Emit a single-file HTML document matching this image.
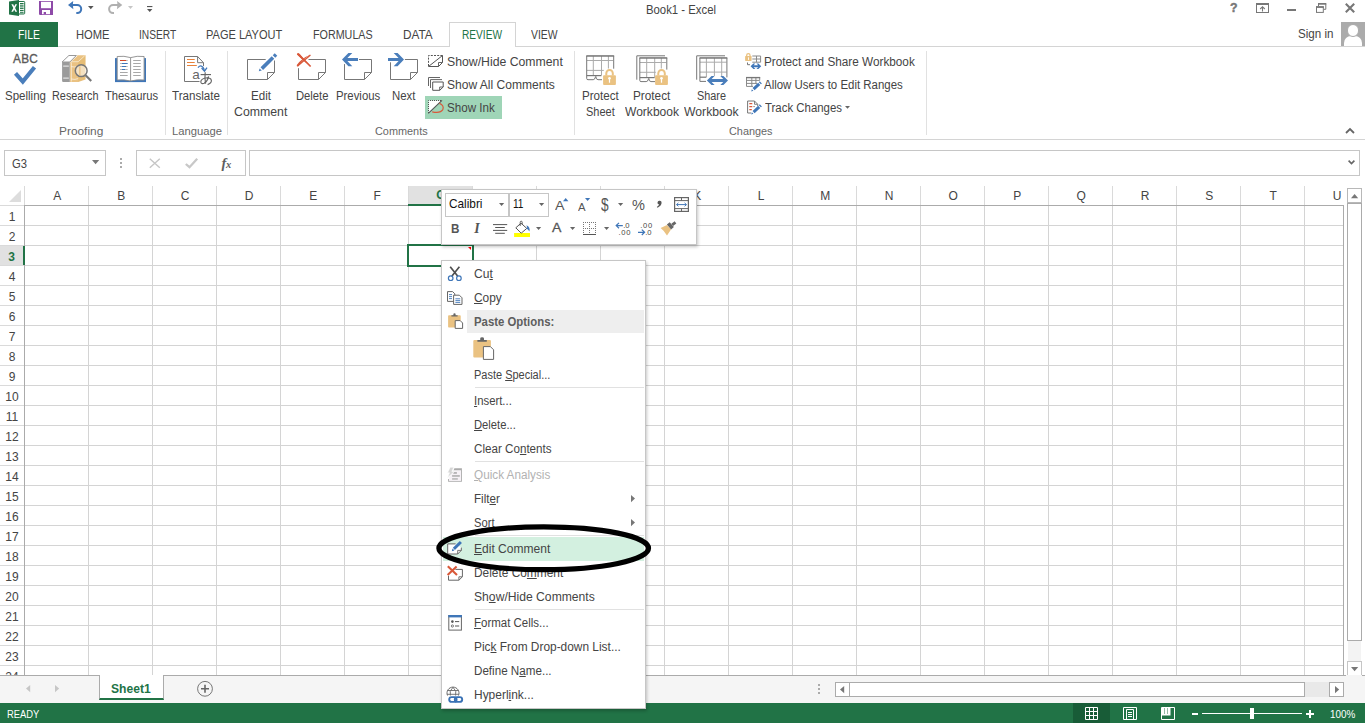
<!DOCTYPE html>
<html><head><meta charset="utf-8"><title>Book1 - Excel</title>
<style>
*{box-sizing:border-box;margin:0;padding:0}
html,body{width:1365px;height:723px;overflow:hidden;background:#fff;font-family:"Liberation Sans",sans-serif}
#app{position:relative;width:1365px;height:723px;overflow:hidden;background:#fff}
.t{position:absolute;white-space:pre;transform-origin:0 50%;font-family:"Liberation Sans",sans-serif}
.t u{text-decoration:underline;text-underline-offset:1px}
.a{position:absolute}
.vsep{position:absolute;width:1px;background:#e1e1e1;top:51px;height:84px}
svg{position:absolute;overflow:visible}
</style></head><body><div id="app">
<!-- tab row -->
<div class="a" style="left:0;top:46px;width:1365px;height:1px;background:#d4d4d4"></div>
<div class="a" style="left:0;top:22px;width:58px;height:25px;background:#217346"></div>
<div class="a" style="left:449px;top:22px;width:67px;height:25px;background:#fff;border:1px solid #d4d4d4;border-bottom:none"></div>
<!-- avatar -->
<div class="a" style="left:1341px;top:22px;width:24px;height:24px;background:#ababab;overflow:hidden">
 <div class="a" style="left:2.6px;top:13.6px;width:18.8px;height:16px;border-radius:7px 7px 0 0;background:#fff"></div>
 <div class="a" style="left:5.6px;top:2.2px;width:12.4px;height:12.4px;border-radius:50%;background:#fff;border:1px solid #ababab"></div>
</div>
<!-- ribbon -->
<div class="a" style="left:0;top:139px;width:1365px;height:1px;background:#d4d4d4"></div>
<div class="vsep" style="left:165px"></div>
<div class="vsep" style="left:227px"></div>
<div class="vsep" style="left:574px"></div>
<div class="vsep" style="left:926px"></div>
<div class="a" style="left:425px;top:96px;width:77px;height:23px;background:#9fd5b7"></div>
<!-- formula bar -->
<div class="a" style="left:4px;top:150px;width:102px;height:26px;border:1px solid #c6c6c6;background:#fff"></div>
<div class="a" style="left:136px;top:150px;width:110px;height:26px;border:1px solid #c6c6c6;background:#fff"></div>
<div class="a" style="left:249px;top:150px;width:1111px;height:26px;border:1px solid #c6c6c6;background:#fff"></div>
<!-- grid -->
<div class="a" style="left:25px;top:206px;width:1319px;height:469px;
 background-image:linear-gradient(to right,#d4d4d4 1px,transparent 1px),linear-gradient(to bottom,#d4d4d4 1px,transparent 1px);
 background-size:64px 20px,64px 20px;background-position:63px 0,0 19px"></div>
<div class="a" style="left:0;top:205px;width:24px;height:1px;background:#dadada"></div>
<div class="a" style="left:24px;top:205px;width:1320px;height:1px;background:#ababab"></div>
<div class="a" style="left:24px;top:205px;width:1px;height:470px;background:#ababab"></div>
<div class="a" style="left:1343px;top:205px;width:1px;height:470px;background:#ababab"></div>
<!-- select-all triangle -->
<svg style="left:9px;top:190px" width="12" height="12"><path d="M12 0V12H0Z" fill="#dddddd"/></svg>
<span class="t" style="left:25.2px;width:64px;text-align:center;top:187.7px;font-size:12px;line-height:16px;color:#444">A</span>
<span class="t" style="left:89.2px;width:64px;text-align:center;top:187.7px;font-size:12px;line-height:16px;color:#444">B</span>
<span class="t" style="left:153.2px;width:64px;text-align:center;top:187.7px;font-size:12px;line-height:16px;color:#444">C</span>
<span class="t" style="left:217.2px;width:64px;text-align:center;top:187.7px;font-size:12px;line-height:16px;color:#444">D</span>
<span class="t" style="left:281.2px;width:64px;text-align:center;top:187.7px;font-size:12px;line-height:16px;color:#444">E</span>
<span class="t" style="left:345.2px;width:64px;text-align:center;top:187.7px;font-size:12px;line-height:16px;color:#444">F</span>
<div style="position:absolute;left:409px;top:186px;width:63px;height:18px;background:#e1e1e1"></div>
<span class="t" style="left:408.8px;width:64px;text-align:center;top:187.2px;font-size:12px;line-height:16px;color:#217346;font-weight:700">G</span>
<span class="t" style="left:473.2px;width:64px;text-align:center;top:187.7px;font-size:12px;line-height:16px;color:#444">H</span>
<span class="t" style="left:537.2px;width:64px;text-align:center;top:187.7px;font-size:12px;line-height:16px;color:#444">I</span>
<span class="t" style="left:601.2px;width:64px;text-align:center;top:187.7px;font-size:12px;line-height:16px;color:#444">J</span>
<span class="t" style="left:665.2px;width:64px;text-align:center;top:187.7px;font-size:12px;line-height:16px;color:#444">K</span>
<span class="t" style="left:729.2px;width:64px;text-align:center;top:187.7px;font-size:12px;line-height:16px;color:#444">L</span>
<span class="t" style="left:793.2px;width:64px;text-align:center;top:187.7px;font-size:12px;line-height:16px;color:#444">M</span>
<span class="t" style="left:857.2px;width:64px;text-align:center;top:187.7px;font-size:12px;line-height:16px;color:#444">N</span>
<span class="t" style="left:921.2px;width:64px;text-align:center;top:187.7px;font-size:12px;line-height:16px;color:#444">O</span>
<span class="t" style="left:985.2px;width:64px;text-align:center;top:187.7px;font-size:12px;line-height:16px;color:#444">P</span>
<span class="t" style="left:1049.2px;width:64px;text-align:center;top:187.7px;font-size:12px;line-height:16px;color:#444">Q</span>
<span class="t" style="left:1113.2px;width:64px;text-align:center;top:187.7px;font-size:12px;line-height:16px;color:#444">R</span>
<span class="t" style="left:1177.2px;width:64px;text-align:center;top:187.7px;font-size:12px;line-height:16px;color:#444">S</span>
<span class="t" style="left:1241.2px;width:64px;text-align:center;top:187.7px;font-size:12px;line-height:16px;color:#444">T</span>
<span class="t" style="left:1305.2px;width:64px;text-align:center;top:187.7px;font-size:12px;line-height:16px;color:#444">U</span>
<div style="position:absolute;left:24px;top:186px;width:1px;height:19px;background:#dadada"></div>
<div style="position:absolute;left:88px;top:186px;width:1px;height:19px;background:#dadada"></div>
<div style="position:absolute;left:152px;top:186px;width:1px;height:19px;background:#dadada"></div>
<div style="position:absolute;left:216px;top:186px;width:1px;height:19px;background:#dadada"></div>
<div style="position:absolute;left:280px;top:186px;width:1px;height:19px;background:#dadada"></div>
<div style="position:absolute;left:344px;top:186px;width:1px;height:19px;background:#dadada"></div>
<div style="position:absolute;left:408px;top:186px;width:1px;height:19px;background:#dadada"></div>
<div style="position:absolute;left:472px;top:186px;width:1px;height:19px;background:#dadada"></div>
<div style="position:absolute;left:536px;top:186px;width:1px;height:19px;background:#dadada"></div>
<div style="position:absolute;left:600px;top:186px;width:1px;height:19px;background:#dadada"></div>
<div style="position:absolute;left:664px;top:186px;width:1px;height:19px;background:#dadada"></div>
<div style="position:absolute;left:728px;top:186px;width:1px;height:19px;background:#dadada"></div>
<div style="position:absolute;left:792px;top:186px;width:1px;height:19px;background:#dadada"></div>
<div style="position:absolute;left:856px;top:186px;width:1px;height:19px;background:#dadada"></div>
<div style="position:absolute;left:920px;top:186px;width:1px;height:19px;background:#dadada"></div>
<div style="position:absolute;left:984px;top:186px;width:1px;height:19px;background:#dadada"></div>
<div style="position:absolute;left:1048px;top:186px;width:1px;height:19px;background:#dadada"></div>
<div style="position:absolute;left:1112px;top:186px;width:1px;height:19px;background:#dadada"></div>
<div style="position:absolute;left:1176px;top:186px;width:1px;height:19px;background:#dadada"></div>
<div style="position:absolute;left:1240px;top:186px;width:1px;height:19px;background:#dadada"></div>
<div style="position:absolute;left:1304px;top:186px;width:1px;height:19px;background:#dadada"></div>
<div style="position:absolute;left:1368px;top:186px;width:1px;height:19px;background:#dadada"></div>
<div style="position:absolute;left:408px;top:204px;width:64px;height:2px;background:#217346"></div>
<span class="t" style="left:0;width:24px;text-align:center;top:209.0px;font-size:12px;line-height:16px;color:#444">1</span>
<div style="position:absolute;left:0;top:225px;width:24px;height:1px;background:#dadada"></div>
<span class="t" style="left:0;width:24px;text-align:center;top:229.0px;font-size:12px;line-height:16px;color:#444">2</span>
<div style="position:absolute;left:0;top:245px;width:24px;height:1px;background:#dadada"></div>
<div style="position:absolute;left:0;top:246px;width:25px;height:19px;background:#e1e1e1;border-right:2px solid #217346"></div>
<span class="t" style="left:0;width:24px;text-align:center;top:249.0px;font-size:12px;line-height:16px;color:#217346;font-weight:700;margin-left:-0.5px">3</span>
<div style="position:absolute;left:0;top:265px;width:24px;height:1px;background:#dadada"></div>
<span class="t" style="left:0;width:24px;text-align:center;top:269.0px;font-size:12px;line-height:16px;color:#444">4</span>
<div style="position:absolute;left:0;top:285px;width:24px;height:1px;background:#dadada"></div>
<span class="t" style="left:0;width:24px;text-align:center;top:289.0px;font-size:12px;line-height:16px;color:#444">5</span>
<div style="position:absolute;left:0;top:305px;width:24px;height:1px;background:#dadada"></div>
<span class="t" style="left:0;width:24px;text-align:center;top:309.0px;font-size:12px;line-height:16px;color:#444">6</span>
<div style="position:absolute;left:0;top:325px;width:24px;height:1px;background:#dadada"></div>
<span class="t" style="left:0;width:24px;text-align:center;top:329.0px;font-size:12px;line-height:16px;color:#444">7</span>
<div style="position:absolute;left:0;top:345px;width:24px;height:1px;background:#dadada"></div>
<span class="t" style="left:0;width:24px;text-align:center;top:349.0px;font-size:12px;line-height:16px;color:#444">8</span>
<div style="position:absolute;left:0;top:365px;width:24px;height:1px;background:#dadada"></div>
<span class="t" style="left:0;width:24px;text-align:center;top:369.0px;font-size:12px;line-height:16px;color:#444">9</span>
<div style="position:absolute;left:0;top:385px;width:24px;height:1px;background:#dadada"></div>
<span class="t" style="left:0;width:24px;text-align:center;top:389.0px;font-size:12px;line-height:16px;color:#444">10</span>
<div style="position:absolute;left:0;top:405px;width:24px;height:1px;background:#dadada"></div>
<span class="t" style="left:0;width:24px;text-align:center;top:409.0px;font-size:12px;line-height:16px;color:#444">11</span>
<div style="position:absolute;left:0;top:425px;width:24px;height:1px;background:#dadada"></div>
<span class="t" style="left:0;width:24px;text-align:center;top:429.0px;font-size:12px;line-height:16px;color:#444">12</span>
<div style="position:absolute;left:0;top:445px;width:24px;height:1px;background:#dadada"></div>
<span class="t" style="left:0;width:24px;text-align:center;top:449.0px;font-size:12px;line-height:16px;color:#444">13</span>
<div style="position:absolute;left:0;top:465px;width:24px;height:1px;background:#dadada"></div>
<span class="t" style="left:0;width:24px;text-align:center;top:469.0px;font-size:12px;line-height:16px;color:#444">14</span>
<div style="position:absolute;left:0;top:485px;width:24px;height:1px;background:#dadada"></div>
<span class="t" style="left:0;width:24px;text-align:center;top:489.0px;font-size:12px;line-height:16px;color:#444">15</span>
<div style="position:absolute;left:0;top:505px;width:24px;height:1px;background:#dadada"></div>
<span class="t" style="left:0;width:24px;text-align:center;top:509.0px;font-size:12px;line-height:16px;color:#444">16</span>
<div style="position:absolute;left:0;top:525px;width:24px;height:1px;background:#dadada"></div>
<span class="t" style="left:0;width:24px;text-align:center;top:529.0px;font-size:12px;line-height:16px;color:#444">17</span>
<div style="position:absolute;left:0;top:545px;width:24px;height:1px;background:#dadada"></div>
<span class="t" style="left:0;width:24px;text-align:center;top:549.0px;font-size:12px;line-height:16px;color:#444">18</span>
<div style="position:absolute;left:0;top:565px;width:24px;height:1px;background:#dadada"></div>
<span class="t" style="left:0;width:24px;text-align:center;top:569.0px;font-size:12px;line-height:16px;color:#444">19</span>
<div style="position:absolute;left:0;top:585px;width:24px;height:1px;background:#dadada"></div>
<span class="t" style="left:0;width:24px;text-align:center;top:589.0px;font-size:12px;line-height:16px;color:#444">20</span>
<div style="position:absolute;left:0;top:605px;width:24px;height:1px;background:#dadada"></div>
<span class="t" style="left:0;width:24px;text-align:center;top:609.0px;font-size:12px;line-height:16px;color:#444">21</span>
<div style="position:absolute;left:0;top:625px;width:24px;height:1px;background:#dadada"></div>
<span class="t" style="left:0;width:24px;text-align:center;top:629.0px;font-size:12px;line-height:16px;color:#444">22</span>
<div style="position:absolute;left:0;top:645px;width:24px;height:1px;background:#dadada"></div>
<span class="t" style="left:0;width:24px;text-align:center;top:649.0px;font-size:12px;line-height:16px;color:#444">23</span>
<div style="position:absolute;left:0;top:665px;width:24px;height:1px;background:#dadada"></div>
<span class="t" style="left:0;width:24px;text-align:center;top:669.0px;font-size:12px;line-height:16px;color:#444">24</span>
<div style="position:absolute;left:0;top:685px;width:24px;height:1px;background:#dadada"></div>
<!-- selected cell -->
<div class="a" style="left:407px;top:244px;width:67px;height:23px;border:2px solid #217346"></div>
<svg style="left:468px;top:247px" width="3" height="3"><path d="M0 0H3V3Z" fill="#ff0000"/></svg>
<!-- vertical scrollbar -->
<div class="a" style="left:1348px;top:203px;width:13px;height:458px;background:#f3f3f3"></div>
<div class="a" style="left:1347px;top:188px;width:15px;height:15px;border:1px solid #b8b8b8;background:#fff"></div>
<div class="a" style="left:1347px;top:203px;width:15px;height:438px;border:1px solid #ababab;background:#fff"></div>
<div class="a" style="left:1347px;top:661px;width:15px;height:15px;border:1px solid #c6c6c6;background:#fff"></div>
<svg style="left:1351px;top:193.5px" width="8" height="5"><path d="M0 4.2L3.6 0L7.2 4.2Z" fill="#777"/></svg>
<svg style="left:1351px;top:667px" width="8" height="5"><path d="M0 0L3.6 4.2L7.2 0Z" fill="#777"/></svg>
<!-- sheet tab bar -->
<div class="a" style="left:0;top:675px;width:1365px;height:28px;background:#f5f5f5"></div>
<div class="a" style="left:0;top:675px;width:1346px;height:1px;background:#ababab"></div>
<div class="a" style="left:1362px;top:675px;width:3px;height:1px;background:#ababab"></div>
<div class="a" style="left:99px;top:675px;width:65px;height:25px;background:#fff;border-left:1px solid #ababab;border-right:1px solid #ababab;border-bottom:2px solid #217346"></div>
<!-- hscroll -->
<div class="a" style="left:835px;top:682px;width:509px;height:15px;background:#e9e9e9"></div>
<div class="a" style="left:835px;top:682px;width:15px;height:15px;border:1px solid #ababab;background:#fff"></div>
<div class="a" style="left:849px;top:682px;width:456px;height:15px;border:1px solid #ababab;background:#fff"></div>
<div class="a" style="left:1329px;top:682px;width:15px;height:15px;border:1px solid #ababab;background:#fff"></div>
<svg style="left:840px;top:686px" width="5" height="8"><path d="M4.2 0V7.2L0 3.6Z" fill="#777"/></svg>
<svg style="left:1335px;top:686px" width="5" height="8"><path d="M0 0V7.2L4.2 3.6Z" fill="#777"/></svg>
<!-- status bar -->
<div class="a" style="left:0;top:703px;width:1365px;height:20px;background:#217346"></div>
<div class="a" style="left:1073px;top:703px;width:37px;height:20px;background:#185c37"></div>
<!-- mini toolbar -->
<div class="a" style="left:441px;top:189px;width:256px;height:56px;background:#fff;border:1px solid #c6c6c6;box-shadow:1px 2px 3px rgba(0,0,0,.22);z-index:20"></div>
<div class="a" style="left:445px;top:193px;width:64px;height:24px;background:#fff;border:1px solid #c6c6c6;z-index:21"></div>
<div class="a" style="left:509px;top:193px;width:40px;height:24px;background:#fff;border:1px solid #c6c6c6;z-index:21"></div>
<!-- context menu -->
<div class="a" style="left:441px;top:260px;width:205px;height:449px;background:#fff;border:1px solid #c6c6c6;box-shadow:1px 2px 3px rgba(0,0,0,.22);z-index:20"></div>
<div class="a" style="left:467px;top:310px;width:177px;height:23px;background:#eeeeee;z-index:21"></div>
<div class="a" style="left:443px;top:537px;width:201px;height:24px;background:#d3f0e0;z-index:21"></div>
<div class="a" style="left:475px;top:387px;width:169px;height:1px;background:#e1e1e1;z-index:21"></div>
<div class="a" style="left:475px;top:461px;width:169px;height:1px;background:#e1e1e1;z-index:21"></div>
<div class="a" style="left:475px;top:609px;width:169px;height:1px;background:#e1e1e1;z-index:21"></div>
<div class="a" style="left:475px;top:535px;width:169px;height:1px;background:#e1e1e1;z-index:21"></div>
<span class="t" style="left:646.0px;top:1.5px;font-size:12px;font-weight:400;color:#444;line-height:16px;transform:scaleX(0.9453);">Book1 - Excel</span>
<span class="t" style="left:18.0px;top:26.5px;font-size:12px;font-weight:400;color:#fff;line-height:16px;transform:scaleX(0.8681);">FILE</span>
<span class="t" style="left:76.0px;top:26.5px;font-size:12px;font-weight:400;color:#444;line-height:16px;transform:scaleX(0.9306);">HOME</span>
<span class="t" style="left:139.3px;top:26.5px;font-size:12px;font-weight:400;color:#444;line-height:16px;transform:scaleX(0.8494);">INSERT</span>
<span class="t" style="left:206.3px;top:26.5px;font-size:12px;font-weight:400;color:#444;line-height:16px;transform:scaleX(0.9189);">PAGE LAYOUT</span>
<span class="t" style="left:312.8px;top:26.5px;font-size:12px;font-weight:400;color:#444;line-height:16px;transform:scaleX(0.8952);">FORMULAS</span>
<span class="t" style="left:402.8px;top:26.5px;font-size:12px;font-weight:400;color:#444;line-height:16px;transform:scaleX(0.9823);">DATA</span>
<span class="t" style="left:462.0px;top:26.5px;font-size:12px;font-weight:400;color:#217346;line-height:16px;transform:scaleX(0.8449);">REVIEW</span>
<span class="t" style="left:531.0px;top:26.5px;font-size:12px;font-weight:400;color:#444;line-height:16px;transform:scaleX(0.8640);">VIEW</span>
<span class="t" style="left:1298.0px;top:25.5px;font-size:12px;font-weight:400;color:#444;line-height:16px;transform:scaleX(0.9672);">Sign in</span>
<span class="t" style="left:5.0px;top:87.5px;font-size:12px;font-weight:400;color:#444;line-height:16px;transform:scaleX(0.9601);">Spelling</span>
<span class="t" style="left:52.0px;top:87.5px;font-size:12px;font-weight:400;color:#444;line-height:16px;transform:scaleX(0.9054);">Research</span>
<span class="t" style="left:105.0px;top:87.5px;font-size:12px;font-weight:400;color:#444;line-height:16px;transform:scaleX(0.9347);">Thesaurus</span>
<span class="t" style="left:172.0px;top:87.5px;font-size:12px;font-weight:400;color:#444;line-height:16px;transform:scaleX(0.9682);">Translate</span>
<span class="t" style="left:251.0px;top:87.5px;font-size:12px;font-weight:400;color:#444;line-height:16px;transform:scaleX(0.9668);">Edit</span>
<span class="t" style="left:234.3px;top:103.5px;font-size:12px;font-weight:400;color:#444;line-height:16px;transform:scaleX(1.0266);">Comment</span>
<span class="t" style="left:295.5px;top:87.5px;font-size:12px;font-weight:400;color:#444;line-height:16px;transform:scaleX(0.9369);">Delete</span>
<span class="t" style="left:335.5px;top:87.5px;font-size:12px;font-weight:400;color:#444;line-height:16px;transform:scaleX(0.9467);">Previous</span>
<span class="t" style="left:392.3px;top:87.5px;font-size:12px;font-weight:400;color:#444;line-height:16px;transform:scaleX(0.9478);">Next</span>
<span class="t" style="left:447.2px;top:54.4px;font-size:12px;font-weight:400;color:#444;line-height:16px;transform:scaleX(1.0212);">Show/Hide Comment</span>
<span class="t" style="left:447.2px;top:77.0px;font-size:12px;font-weight:400;color:#444;line-height:16px;transform:scaleX(1.0040);">Show All Comments</span>
<span class="t" style="left:447.2px;top:100.4px;font-size:12px;font-weight:400;color:#444;line-height:16px;transform:scaleX(0.9684);">Show Ink</span>
<span class="t" style="left:582.0px;top:87.5px;font-size:12px;font-weight:400;color:#444;line-height:16px;transform:scaleX(0.9654);">Protect</span>
<span class="t" style="left:586.3px;top:103.5px;font-size:12px;font-weight:400;color:#444;line-height:16px;transform:scaleX(0.9152);">Sheet</span>
<span class="t" style="left:633.4px;top:87.5px;font-size:12px;font-weight:400;color:#444;line-height:16px;transform:scaleX(0.9812);">Protect</span>
<span class="t" style="left:624.6px;top:103.5px;font-size:12px;font-weight:400;color:#444;line-height:16px;transform:scaleX(1.0035);">Workbook</span>
<span class="t" style="left:697.0px;top:87.5px;font-size:12px;font-weight:400;color:#444;line-height:16px;transform:scaleX(0.9054);">Share</span>
<span class="t" style="left:684.1px;top:103.5px;font-size:12px;font-weight:400;color:#444;line-height:16px;transform:scaleX(1.0165);">Workbook</span>
<span class="t" style="left:764.2px;top:54.4px;font-size:12px;font-weight:400;color:#444;line-height:16px;transform:scaleX(0.9800);">Protect and Share Workbook</span>
<span class="t" style="left:764.2px;top:77.0px;font-size:12px;font-weight:400;color:#444;line-height:16px;transform:scaleX(0.9546);">Allow Users to Edit Ranges</span>
<span class="t" style="left:765.0px;top:100.3px;font-size:12px;font-weight:400;color:#444;line-height:16px;transform:scaleX(0.9514);">Track Changes</span>
<span class="t" style="left:59.3px;top:122.9px;font-size:11px;font-weight:400;color:#666;line-height:16px;transform:scaleX(1.0809);">Proofing</span>
<span class="t" style="left:171.5px;top:122.9px;font-size:11px;font-weight:400;color:#666;line-height:16px;transform:scaleX(1.0214);">Language</span>
<span class="t" style="left:374.6px;top:122.9px;font-size:11px;font-weight:400;color:#666;line-height:16px;transform:scaleX(0.9890);">Comments</span>
<span class="t" style="left:729.0px;top:122.9px;font-size:11px;font-weight:400;color:#666;line-height:16px;transform:scaleX(0.9876);">Changes</span>
<span class="t" style="left:11.5px;top:155.5px;font-size:12px;font-weight:400;color:#444;line-height:16px;transform:scaleX(0.9366);">G3</span>
<span class="t" style="left:6.7px;top:706.0px;font-size:11px;font-weight:400;color:#fff;line-height:16px;transform:scaleX(0.8521);">READY</span>
<span class="t" style="left:1330.0px;top:706.0px;font-size:11px;font-weight:400;color:#fff;line-height:16px;transform:scaleX(0.8991);">100%</span>
<span class="t" style="left:111.3px;top:680.8px;font-size:13px;font-weight:700;color:#217346;line-height:16px;transform:scaleX(0.9310);">Sheet1</span>
<span class="t" style="left:448.5px;top:195.5px;font-size:13px;font-weight:400;color:#111;line-height:16px;transform:scaleX(0.9092);z-index:30;">Calibri</span>
<span class="t" style="left:512.5px;top:195.5px;font-size:13px;font-weight:400;color:#111;line-height:16px;transform:scaleX(0.7778);z-index:30;">11</span>
<span class="t" style="left:474.2px;top:265.9px;font-size:12px;font-weight:400;color:#444;line-height:16px;transform:scaleX(1.0060);z-index:30;">Cu<u>t</u></span>
<span class="t" style="left:474.2px;top:290.1px;font-size:12px;font-weight:400;color:#444;line-height:16px;transform:scaleX(0.9918);z-index:30;"><u>C</u>opy</span>
<span class="t" style="left:474.2px;top:314.0px;font-size:12px;font-weight:700;color:#5e5e5e;line-height:16px;transform:scaleX(0.9482);z-index:30;">Paste Options:</span>
<span class="t" style="left:474.2px;top:367.2px;font-size:12px;font-weight:400;color:#444;line-height:16px;transform:scaleX(0.9148);z-index:30;">Paste <u>S</u>pecial...</span>
<span class="t" style="left:474.2px;top:393.0px;font-size:12px;font-weight:400;color:#444;line-height:16px;transform:scaleX(0.9443);z-index:30;"><u>I</u>nsert...</span>
<span class="t" style="left:474.2px;top:417.0px;font-size:12px;font-weight:400;color:#444;line-height:16px;transform:scaleX(0.9351);z-index:30;"><u>D</u>elete...</span>
<span class="t" style="left:474.2px;top:440.6px;font-size:12px;font-weight:400;color:#444;line-height:16px;transform:scaleX(0.9692);z-index:30;">Clear Co<u>n</u>tents</span>
<span class="t" style="left:474.2px;top:467.1px;font-size:12px;font-weight:400;color:#b2b2b2;line-height:16px;transform:scaleX(0.9776);z-index:30;"><u>Q</u>uick Analysis</span>
<span class="t" style="left:474.2px;top:491.0px;font-size:12px;font-weight:400;color:#444;line-height:16px;transform:scaleX(0.9667);z-index:30;">Filt<u>e</u>r</span>
<span class="t" style="left:474.2px;top:514.5px;font-size:12px;font-weight:400;color:#444;line-height:16px;transform:scaleX(0.9298);z-index:30;">S<u>o</u>rt</span>
<span class="t" style="left:474.2px;top:540.7px;font-size:12px;font-weight:400;color:#444;line-height:16px;transform:scaleX(1.0033);z-index:30;"><u>E</u>dit Comment</span>
<span class="t" style="left:474.2px;top:564.7px;font-size:12px;font-weight:400;color:#444;line-height:16px;transform:scaleX(0.9904);z-index:30;">Delete Co<u>m</u>ment</span>
<span class="t" style="left:474.2px;top:588.9px;font-size:12px;font-weight:400;color:#444;line-height:16px;transform:scaleX(1.0117);z-index:30;">Sh<u>o</u>w/Hide Comments</span>
<span class="t" style="left:474.2px;top:614.8px;font-size:12px;font-weight:400;color:#444;line-height:16px;transform:scaleX(0.9560);z-index:30;"><u>F</u>ormat Cells...</span>
<span class="t" style="left:474.2px;top:638.7px;font-size:12px;font-weight:400;color:#444;line-height:16px;transform:scaleX(0.9916);z-index:30;">Pic<u>k</u> From Drop-down List...</span>
<span class="t" style="left:474.2px;top:663.0px;font-size:12px;font-weight:400;color:#444;line-height:16px;transform:scaleX(0.9694);z-index:30;">Define N<u>a</u>me...</span>
<span class="t" style="left:474.2px;top:686.8px;font-size:12px;font-weight:400;color:#444;line-height:16px;transform:scaleX(0.9959);z-index:30;">Hyperl<u>i</u>nk...</span>
<!-- ===== title bar icons ===== -->
<!-- excel logo -->
<svg style="left:9px;top:0px" width="17" height="17" viewBox="0 0 17 17">
 <rect x="9" y="1.5" width="6.7" height="12.5" rx="0.8" fill="#fff" stroke="#217346" stroke-width="1"/>
 <g fill="#217346"><rect x="11" y="3" width="3.6" height="1.3"/><rect x="11" y="5.3" width="3.6" height="1.3"/><rect x="11" y="7.6" width="3.6" height="1.3"/><rect x="11" y="9.9" width="3.6" height="1.3"/><rect x="11" y="12.2" width="3.6" height="1.0"/></g>
 <path d="M0 1.6L10 0V16L0 14.4Z" fill="#217346"/>
 <path d="M2.4 4.2H4.2L5.2 6.6L6.3 4.2H8L6.1 8L8.1 11.8H6.3L5.2 9.4L4.1 11.8H2.3L4.3 8Z" fill="#fff"/>
</svg>
<!-- save -->
<svg style="left:39px;top:1px" width="14" height="14" viewBox="0 0 14 14">
 <path d="M0 0H14V14H0.8L0 13.2Z" fill="#8e4aa8"/>
 <rect x="2" y="0.8" width="10" height="6.4" fill="#fff"/>
 <rect x="3" y="9" width="8" height="4.2" fill="#fff"/>
 <rect x="4.7" y="11" width="2.3" height="2.2" fill="#8e4aa8"/>
</svg>
<!-- undo -->
<svg style="left:67px;top:0px" width="16" height="15" viewBox="0 0 16 15">
 <path d="M1 5.1L6.2 1.1L5.9 3.9L7 4.2L6 6.4L6.4 9.2Z" fill="#3f76b8"/>
 <path d="M5.5 5.1H10.2A4 4 0 0 1 10.2 13.1H9.3" fill="none" stroke="#3f76b8" stroke-width="2"/>
</svg>
<svg style="left:88px;top:6px" width="6" height="4"><path d="M0 0H5.6L2.8 3.2Z" fill="#555"/></svg>
<!-- redo -->
<svg style="left:107px;top:0px" width="16" height="15" viewBox="0 0 16 15">
 <path d="M15.3 5.1L10.1 1.1L10.4 3.9L9.3 4.2L10.3 6.4L9.9 9.2Z" fill="#b0b0b0"/>
 <path d="M10.8 5.1H6.1A4 4 0 0 0 6.1 13.1H7" fill="none" stroke="#b0b0b0" stroke-width="2"/>
</svg>
<svg style="left:128px;top:6px" width="6" height="4"><path d="M0 0H5L2.5 3Z" fill="#c6c6c6"/></svg>
<!-- customize QAT -->
<svg style="left:147px;top:6px" width="6" height="7"><rect x="0" y="0" width="5.4" height="1.1" fill="#555"/><path d="M0 3H5.4L2.7 6Z" fill="#555"/></svg>
<!-- help ? -->
<span class="t" style="left:1229.6px;top:0.2px;font-size:13px;font-weight:700;color:#777;line-height:16px;-webkit-text-stroke:0.4px #777;transform:scaleX(0.95)">?</span>
<!-- ribbon display options -->
<svg style="left:1256px;top:3px" width="13" height="10" viewBox="0 0 13 10">
 <rect x="0.5" y="0.5" width="12" height="9" fill="none" stroke="#777" stroke-width="1"/>
 <rect x="0" y="0" width="13" height="2" fill="#777"/>
 <path d="M6.5 3.6V8.5M4.2 6L6.5 3.7L8.8 6" fill="none" stroke="#777" stroke-width="1.1"/>
</svg>
<!-- minimize -->
<div class="a" style="left:1287px;top:9px;width:9px;height:2px;background:#777"></div>
<!-- restore -->
<svg style="left:1316px;top:3px" width="11" height="10" viewBox="0 0 11 10">
 <path d="M2.5 3V0.8H9.8V6.3H7.6" fill="none" stroke="#777" stroke-width="1"/>
 <rect x="2" y="0" width="8.3" height="1.6" fill="#777"/>
 <rect x="0.5" y="3.8" width="6.8" height="5.6" fill="#fff" stroke="#777" stroke-width="1"/>
 <rect x="0" y="3.3" width="7.8" height="1.6" fill="#777"/>
</svg>
<!-- close -->
<svg style="left:1345px;top:3px" width="10" height="10" viewBox="0 0 10 10"><path d="M0.8 0.8L9.2 9.2M9.2 0.8L0.8 9.2" stroke="#777" stroke-width="2.1" fill="none"/></svg>
<!-- collapse ribbon chevron -->
<svg style="left:1345px;top:127px" width="10" height="7" viewBox="0 0 10 7"><path d="M1 6L5 2L9 6" fill="none" stroke="#666" stroke-width="1.8"/></svg>
<!-- formula bar expand chevron -->
<svg style="left:1348px;top:160px" width="7" height="5" viewBox="0 0 7 5"><path d="M0.6 0.6L3.5 3.6L6.4 0.6" fill="none" stroke="#666" stroke-width="1.6"/></svg>
<!-- ===== ribbon big icons ===== -->
<!-- spelling -->
<span class="t" style="left:13.4px;top:50.5px;font-size:12px;line-height:16px;color:#5a5a5a;letter-spacing:0.3px;-webkit-text-stroke:0.35px #5a5a5a;transform:scaleX(0.98)">ABC</span>
<svg style="left:12px;top:64px" width="26" height="22" viewBox="12 64 26 22"><path d="M15.5 73.3L22.8 81.6L34.5 67.2" fill="none" stroke="#4a7ebb" stroke-width="4.1"/></svg>
<!-- research -->
<svg style="left:60px;top:53px" width="34" height="31" viewBox="60 53 34 31">
 <path d="M69.8 62L77.2 55.3H85.6V79.5L78.3 82H69.8Z" fill="#eac282"/>
 <path d="M70.3 62L77.3 55.8" stroke="#fff" stroke-width="0.8" fill="none" opacity=".9"/>
 <path d="M78.3 62L85 56V79L78.3 81.6Z" fill="#e6bd76"/>
 <path d="M71.3 62.4V81.6M71.3 66.6Q75 67.6 78.2 66.2M71.3 79Q75 80 78.2 78.6" stroke="#fff" stroke-width="0.7" fill="none" opacity=".85"/>
 <path d="M70.2 61.7H78.2L84.6 55.9" stroke="#f6e6c8" stroke-width="0.9" fill="none"/>
 <path d="M62.1 62L68.9 55.5H76.3L69.8 62Z" fill="#fff" stroke="#8c8c8c" stroke-width="0.9"/>
 <path d="M62.1 61.9H69.8V82H63.1Q62.1 82 62.1 81Z" fill="#9b9b9b"/>
 <rect x="63.2" y="65.6" width="5.6" height="1" fill="#f2f2f2"/><rect x="63.2" y="77.6" width="5.6" height="1" fill="#f2f2f2"/>
 <circle cx="81.2" cy="70.7" r="5.9" fill="#fff" fill-opacity=".55" stroke="#777" stroke-width="1.5"/>
 <path d="M79.8 66.3V75.2" stroke="#eac282" stroke-width="1.6" opacity=".8"/>
 <path d="M85.6 75.3L91.2 81" stroke="#777" stroke-width="2.2" fill="none"/>
</svg>
<!-- thesaurus -->
<svg style="left:114px;top:55px" width="34" height="29" viewBox="114 55 34 29">
 <rect x="115" y="58.1" width="31" height="24" fill="#3f76b8"/>
 <path d="M117.2 56.5Q124 55.6 130.6 57.6Q137 55.6 144.1 56.5V80Q137 79.3 130.6 81Q124 79.3 117.2 80Z" fill="#fff" stroke="#8a8a8a" stroke-width="0.9"/>
 <path d="M130.6 57.6V81" stroke="#8a8a8a" stroke-width="0.9"/>
 <g stroke-width="1" fill="none">
  <path d="M120 60.5H126" stroke="#d24726"/><path d="M126 60.5H127.7" stroke="#b5b5b5"/>
  <path d="M120 63.5H122" stroke="#b5b5b5"/><path d="M122 63.5H127.7" stroke="#3f76b8"/>
  <path d="M120 66.5H122" stroke="#b5b5b5"/><path d="M122 66.5H126" stroke="#3f76b8"/><path d="M126 66.5H127.7" stroke="#b5b5b5"/>
  <path d="M120 69.5H122" stroke="#b5b5b5"/><path d="M122 69.5H125" stroke="#3f76b8"/><path d="M125 69.5H127.7" stroke="#b5b5b5"/>
  <path d="M120 72.5H127.7M120 75.5H127.7" stroke="#a8a8a8"/>
  <path d="M133.2 60.5H140.7M133.2 63.5H140.7M133.2 66.5H140.7M133.2 69.5H140.7M133.2 72.5H140.7M133.2 75.5H140.7" stroke="#a8a8a8"/>
 </g>
</svg>
<!-- translate -->
<svg style="left:183px;top:55px" width="31" height="31" viewBox="183 55 31 31">
 <path d="M203.5 66V62.7L197.6 56.5H184.5V81.5H199.5" fill="none" stroke="#777" stroke-width="1"/>
 <path d="M197.6 56.5V62.7H203.5" fill="none" stroke="#777" stroke-width="1"/>
 <path d="M187 59.5H194.7M187 62.5H194.7M187 65.5H196.8" stroke="#e8823a" stroke-width="1.1"/>
 <path d="M198 67.6Q201.6 63.4 204.4 69.8" fill="none" stroke="#3f76b8" stroke-width="1.3"/>
 <path d="M201.6 68L204.5 71.2L207 67.6" fill="none" stroke="#3f76b8" stroke-width="1.3"/>
 <text x="192.2" y="78.8" font-family="Liberation Sans, sans-serif" font-size="13.5" fill="#666">a</text>
 <g fill="none" stroke="#666" stroke-width="1.15">
  <path d="M200.6 74.6H211"/>
  <path d="M205.2 72.2Q204.5 78 205.6 83.6"/>
  <path d="M208.6 76.4Q207.8 81 204.2 83.3Q201.2 84.3 200.8 82Q200.8 79 205.5 78Q211 77.2 211.4 80.6Q211.5 83.5 207.6 84.6"/>
 </g>
</svg>
<!-- edit comment -->
<svg style="left:246px;top:52px" width="33" height="29" viewBox="246 52 33 29">
 <path d="M265.7 59.5H247.5V79.5H267.5L274.5 72.5V60.5" fill="none" stroke="#777" stroke-width="1"/>
 <path d="M267.5 79.5V72.5H274.5" fill="none" stroke="#777" stroke-width="1"/>
 <path d="M261.8 68.6L273 57.5" stroke="#4a7ebb" stroke-width="3.6" fill="none"/>
 <path d="M274 56.5L276 54.5" stroke="#4a7ebb" stroke-width="3.6" fill="none"/>
 <path d="M258.8 71.2L259.6 68.4L261.8 70.5Z" fill="#4a7ebb"/>
</svg>
<!-- delete comment -->
<svg style="left:295px;top:52px" width="33" height="29" viewBox="295 52 33 29">
 <path d="M308.5 59.5H325.5V72.5L318.5 79.5H298.5V68.2" fill="none" stroke="#777" stroke-width="1"/>
 <path d="M318.5 79.5V72.5H325.5" fill="none" stroke="#777" stroke-width="1"/>
 <path d="M297.2 53.4Q299 53 300 54.2Q305 60 311 66.6Q305 62.5 296.9 54.6Z" fill="#d9593a"/>
 <path d="M297.6 53.6L310.6 66.5" stroke="#d9593a" stroke-width="1.6" fill="none"/>
 <path d="M311 54.4Q303 58.5 298 66.5Q296.6 67 296.8 65Q301.5 58 311 54.4Z" fill="#d9593a"/>
 <path d="M310.4 55L297.6 66" stroke="#d9593a" stroke-width="1.5" fill="none"/>
</svg>
<!-- previous -->
<svg style="left:341px;top:52px" width="33" height="29" viewBox="341 52 33 29">
 <path d="M359 59.5H371.5V72.5L364.5 79.5H344.5V64.1" fill="none" stroke="#777" stroke-width="1"/>
 <path d="M364.5 79.5V72.5H371.5" fill="none" stroke="#777" stroke-width="1"/>
 <path d="M342 59.6L348.4 53H352.3L347.4 58.1H358V61.1H347.4L352.3 66.2H348.4Z" fill="#4a7ebb"/>
</svg>
<!-- next -->
<svg style="left:387px;top:52px" width="33" height="29" viewBox="387 52 33 29">
 <path d="M404.9 59.5H417.5V72.5L410.5 79.5H390.5V62.3" fill="none" stroke="#777" stroke-width="1"/>
 <path d="M410.5 79.5V72.5H417.5" fill="none" stroke="#777" stroke-width="1"/>
 <path d="M404 59.6L397.6 53H393.7L398.6 58.1H388V61.1H398.6L393.7 66.2H397.6Z" fill="#4a7ebb"/>
</svg>
<!-- small: show/hide comment -->
<svg style="left:427px;top:54px" width="18" height="14" viewBox="427 54 18 14">
 <path d="M428.5 66V55.5H442.5" fill="none" stroke="#555" stroke-width="1" stroke-dasharray="2 1.2"/>
 <path d="M428.5 66.5H438.5L442.5 62.5V55.5" fill="none" stroke="#555" stroke-width="1"/>
 <path d="M438.5 66.5V62.5H442.5" fill="none" stroke="#555" stroke-width="0.9"/>
 <path d="M428.5 66.5L442.5 55.5" stroke="#555" stroke-width="1" fill="none"/>
</svg>
<!-- small: show all comments -->
<svg style="left:427px;top:76px" width="18" height="16" viewBox="427 76 18 16">
 <path d="M428.5 86V77.5H440" fill="none" stroke="#666" stroke-width="1"/>
 <path d="M430.5 88V79.6H442" fill="none" stroke="#666" stroke-width="1"/>
 <path d="M432.7 82H443.2V87L439.7 90.3H432.7Z" fill="#fff" stroke="#555" stroke-width="1"/>
 <path d="M439.7 90.3V87H443.2" fill="none" stroke="#555" stroke-width="0.9"/>
</svg>
<!-- small: show ink -->
<svg style="left:427px;top:99px" width="18" height="16" viewBox="427 99 18 16">
 <path d="M428.5 100.5H441.5L428.5 113Z" fill="#fff"/>
 <path d="M428.5 113V100.5H441" fill="none" stroke="#555" stroke-width="1" stroke-dasharray="1 1"/>
 <path d="M428.3 113.3L442 100.3" stroke="#555" stroke-width="1.1" fill="none"/>
 <path d="M439.4 103.4Q444.5 105.5 442.8 109.6Q440.5 113.6 432.2 111.8" fill="none" stroke="#d9593a" stroke-width="1.2"/>
</svg>
<!-- protect sheet -->
<svg style="left:585px;top:54px" width="33" height="32" viewBox="585 54 33 32">
 <g fill="none" stroke="#ababab" stroke-width="1">
  <path d="M593.3 56V75M601.5 56V75M608.4 56V68.5M587 60.5H613M587 70.4H603.8"/>
 </g>
 <path d="M613.7 68.7V56H586.7V78.5Q586.7 79.7 588 79.7H593.2Q594.6 79.7 595 78L595.8 76.4" fill="none" stroke="#777" stroke-width="1"/>
 <path d="M586.2 55.9H614.2" stroke="#777" stroke-width="1.1"/>
 <path d="M586.7 75.6H601.5" stroke="#777" stroke-width="1.2"/>
 <path d="M595.8 76.4Q596 79.7 598 79.7H602" fill="none" stroke="#777" stroke-width="1"/>
 <rect x="603.1" y="75.3" width="12.8" height="9.6" rx="0.9" fill="#eac282"/>
 <path d="M606.3 75.6V73.2A3.25 3.25 0 0 1 612.8 73.2V75.6" fill="none" stroke="#eac282" stroke-width="2"/>
 <circle cx="609.5" cy="78.3" r="1.3" fill="#fff"/><rect x="608.9" y="78.5" width="1.2" height="4.2" fill="#fff"/>
</svg>
<!-- protect workbook -->
<svg style="left:635px;top:54px" width="35" height="32" viewBox="635 54 35 32">
 <path d="M636.8 79.7V55.8H665" fill="none" stroke="#777" stroke-width="1"/>
 <g fill="none" stroke="#ababab" stroke-width="1">
  <path d="M646.7 58V77M654.7 58V77M661.3 58V68.5M640 62.5H666.3M640 72.3H655.8"/>
 </g>
 <path d="M666.8 69.6V58H639.8V80.4Q639.8 81.6 641 81.6H646.2Q647.6 81.6 648 80L648.8 78.4" fill="none" stroke="#777" stroke-width="1"/>
 <path d="M639.3 57.9H667.3" stroke="#777" stroke-width="1.1"/>
 <path d="M639.8 77.6H654.7" stroke="#777" stroke-width="1.2"/>
 <path d="M648.8 78.4Q649 81.6 651 81.6H655" fill="none" stroke="#777" stroke-width="1"/>
 <rect x="655.1" y="75.3" width="12.8" height="9.6" rx="0.9" fill="#eac282"/>
 <path d="M658.3 75.6V73.2A3.25 3.25 0 0 1 664.8 73.2V75.6" fill="none" stroke="#eac282" stroke-width="2"/>
 <circle cx="661.5" cy="78.3" r="1.3" fill="#fff"/><rect x="660.9" y="78.5" width="1.2" height="4.2" fill="#fff"/>
</svg>
<!-- share workbook -->
<svg style="left:695px;top:54px" width="35" height="32" viewBox="695 54 35 32">
 <path d="M696.7 79.7V55.8H725" fill="none" stroke="#777" stroke-width="1"/>
 <g fill="none" stroke="#ababab" stroke-width="1">
  <path d="M706.4 58V77M714.4 58V76M721.7 58V76M700 62.2H726.5M700 72.1H726.5"/>
 </g>
 <path d="M726.9 77.4V58H699.9V81.4H706" fill="none" stroke="#777" stroke-width="1"/>
 <path d="M699.4 57.9H727.4" stroke="#777" stroke-width="1.1"/>
 <path d="M699.9 77.2H706.4" stroke="#777" stroke-width="1.2"/>
 <path d="M706.9 80.4L711.5 75.9H714.6L711.6 78.9H723.3L720.3 75.9H723.4L728 80.4L723.4 84.9H720.3L723.3 81.9H711.6L714.6 84.9H711.5Z" fill="#4a7ebb"/>
</svg>
<!-- small: protect and share workbook -->
<svg style="left:744px;top:52px" width="19" height="18" viewBox="744 52 19 18">
 <g fill="none" stroke="#8a8a8a" stroke-width="1"><path d="M752.3 56H760.6V62.2M752.3 59H760.6M752.3 62.2H760.6M756.5 56V62.2"/></g>
 <path d="M747.5 62.5V64.7H750" fill="none" stroke="#777" stroke-width="1"/>
 <rect x="745.1" y="56" width="6.5" height="4.9" rx="0.6" fill="#eac282"/>
 <path d="M746.7 56.3V55.3A1.65 1.65 0 0 1 750 55.3V56.3" fill="none" stroke="#eac282" stroke-width="1.3"/>
 <rect x="748" y="57.3" width="0.9" height="2.6" fill="#fff"/>
 <path d="M750.6 66.2L753.4 63.4H755.4L753.6 65.2H758.2L756.4 63.4H758.4L761.2 66.2L758.4 69H756.4L758.2 67.2H753.6L755.4 69H753.4Z" fill="#3f76b8"/>
</svg>
<!-- small: allow users to edit ranges -->
<svg style="left:745px;top:76px" width="18" height="17" viewBox="745 76 18 17">
 <g fill="none" stroke="#8a8a8a" stroke-width="1"><path d="M746.5 77.4V86.4H753M751.8 77.4V86.4M755.9 77.4V84M759.7 77.4V80.4M746.5 80.4H759.7M746.5 83.4H757"/></g>
 <path d="M746 77.6H760.2" stroke="#777" stroke-width="1.4"/>
 <path d="M753.6 89.2L759.2 83.9" stroke="#3f76b8" stroke-width="3" fill="none"/>
 <path d="M759.9 83.3L760.8 82.4" stroke="#3f76b8" stroke-width="3" fill="none"/>
 <path d="M751.3 91.4L751.8 89.2L753.4 90.8Z" fill="#3f76b8"/>
</svg>
<!-- small: track changes -->
<svg style="left:745px;top:99px" width="18" height="17" viewBox="745 99 18 17">
 <path d="M757.7 106V104.3L754.5 101H747.6V113H751" fill="none" stroke="#777" stroke-width="1"/>
 <path d="M754.5 101V104.3H757.7" fill="none" stroke="#777" stroke-width="0.9"/>
 <path d="M749.3 103.6H752.3M749.3 106.6H752.3M749.3 109.6H751.8" stroke="#d9593a" stroke-width="1.1"/>
 <path d="M753.2 106.6H755" stroke="#999" stroke-width="1"/>
 <path d="M753.6 112.2L759.2 106.9" stroke="#3f76b8" stroke-width="3" fill="none"/>
 <path d="M759.9 106.3L760.8 105.4" stroke="#3f76b8" stroke-width="3" fill="none"/>
 <path d="M751.3 114.4L751.8 112.2L753.4 113.8Z" fill="#3f76b8"/>
</svg>
<!-- track changes dropdown arrow -->
<svg style="left:845px;top:106px" width="6" height="4"><path d="M0 0H5L2.5 2.8Z" fill="#666"/></svg>
<!-- ===== formula bar icons ===== -->
<svg style="left:92px;top:160px" width="8" height="5"><path d="M0 0H7.2L3.6 4.2Z" fill="#777"/></svg>
<div class="a" style="left:120px;top:158px;width:2px;height:2px;background:#ababab"></div>
<div class="a" style="left:120px;top:162px;width:2px;height:2px;background:#ababab"></div>
<div class="a" style="left:120px;top:166px;width:2px;height:2px;background:#ababab"></div>
<svg style="left:149px;top:158px" width="12" height="11" viewBox="0 0 12 11"><path d="M0.8 0.8L10.8 9.8M10.8 0.8L0.8 9.8" stroke="#c6c6c6" stroke-width="1.4" fill="none"/></svg>
<svg style="left:185px;top:158px" width="13" height="11" viewBox="0 0 13 11"><path d="M0.8 6L4.5 9.2L12.2 0.8" stroke="#c8c8c8" stroke-width="2.3" fill="none"/></svg>
<span class="t" style="left:221.5px;top:153.5px;font-family:'Liberation Serif',serif;font-style:italic;font-weight:700;font-size:14.5px;line-height:18px;color:#5e5e5e;letter-spacing:-0.4px">f<span style="font-size:10.5px">x</span></span>
<!-- ===== sheet nav ===== -->
<svg style="left:26px;top:685px" width="5" height="8"><path d="M4.2 0V7.2L0 3.6Z" fill="#c6c6c6"/></svg>
<svg style="left:55px;top:685px" width="5" height="8"><path d="M0 0V7.2L4.2 3.6Z" fill="#c6c6c6"/></svg>
<svg style="left:196px;top:680px" width="18" height="18" viewBox="0 0 18 18"><circle cx="9" cy="8.8" r="7.4" fill="none" stroke="#777" stroke-width="1"/><path d="M9 4.8V12.8M5 8.8H13" stroke="#666" stroke-width="1.6"/></svg>
<div class="a" style="left:818px;top:684px;width:2px;height:2px;background:#ababab"></div>
<div class="a" style="left:818px;top:688px;width:2px;height:2px;background:#ababab"></div>
<div class="a" style="left:818px;top:692px;width:2px;height:2px;background:#ababab"></div>
<!-- ===== status bar icons ===== -->
<svg style="left:1085px;top:707px" width="13" height="13" viewBox="0 0 13 13"><path d="M0.5 0.5H12.5V12.5H0.5ZM4.5 0.5V12.5M8.5 0.5V12.5M0.5 4.5H12.5M0.5 8.5H12.5" fill="none" stroke="#fff" stroke-width="1"/></svg>
<svg style="left:1123px;top:707px" width="14" height="13" viewBox="0 0 14 13"><path d="M0.5 0.5H13.5V12.5H0.5Z" fill="none" stroke="#fff" stroke-width="1"/><path d="M3.5 2.5H10.5V12.5H3.5ZM5 5.5H9M5 7.5H9M5 9.5H9" fill="none" stroke="#fff" stroke-width="1"/></svg>
<svg style="left:1161px;top:707px" width="14" height="13" viewBox="0 0 14 13"><path d="M0.5 0.5H13.5V12.5H0.5Z" fill="none" stroke="#fff" stroke-width="1"/><rect x="1" y="1" width="8.5" height="7.5" fill="#fff"/><path d="M3.5 1V7M6.5 1V7" stroke="#217346" stroke-width="0.8" opacity=".6"/></svg>
<div class="a" style="left:1192px;top:713px;width:6px;height:2px;background:#fff"></div>
<div class="a" style="left:1202px;top:713px;width:100px;height:1px;background:#fff"></div>
<div class="a" style="left:1250px;top:708px;width:4px;height:11px;background:#fff"></div>
<div class="a" style="left:1306px;top:713px;width:8px;height:2px;background:#fff"></div>
<div class="a" style="left:1309px;top:710px;width:2px;height:8px;background:#fff"></div>
<!-- ===== mini toolbar icons (z>=30) ===== -->
<svg style="left:498.8px;top:203px;z-index:30" width="6" height="4"><path d="M0 0H5.2L2.6 3Z" fill="#666"/></svg>
<svg style="left:538.8px;top:203px;z-index:30" width="6" height="4"><path d="M0 0H5.2L2.6 3Z" fill="#666"/></svg>
<!-- grow font -->
<span class="t" style="left:555px;top:197.5px;font-size:13px;line-height:16px;color:#555;z-index:30;transform:scaleX(1.1)">A</span>
<svg style="left:562.8px;top:197.6px;z-index:30" width="6" height="4"><path d="M0 3.2H5.4L2.7 0Z" fill="#3f76b8"/></svg>
<!-- shrink font -->
<span class="t" style="left:578.2px;top:198.5px;font-size:10.5px;line-height:16px;color:#555;z-index:30;transform:scaleX(1.08)">A</span>
<svg style="left:585px;top:198px;z-index:30" width="6" height="4"><path d="M0 0H5.2L2.6 3Z" fill="#3f76b8"/></svg>
<!-- $ -->
<span class="t" style="left:600.6px;top:195.2px;font-size:17.5px;line-height:20px;color:#555;z-index:30;transform:scaleX(0.78)">$</span>
<svg style="left:617.9px;top:203px;z-index:30" width="6" height="4"><path d="M0 0H5.2L2.6 3Z" fill="#666"/></svg>
<!-- % -->
<span class="t" style="left:632px;top:196.3px;font-size:15px;line-height:18px;color:#555;z-index:30;transform:scaleX(0.97)">%</span>
<!-- comma -->
<svg style="left:656px;top:200px;z-index:30" width="7" height="9" viewBox="0 0 7 9"><path d="M3.6 0.8A1.9 1.9 0 0 1 5.6 2.8Q5.6 5.6 1.6 7.8L0.8 7Q3 5.6 3.2 4.6A1.9 1.9 0 0 1 3.6 0.8Z" fill="#555"/></svg>
<!-- merge & center -->
<svg style="left:674px;top:197px;z-index:30" width="15" height="15" viewBox="0 0 15 15">
 <rect x="0.6" y="0.6" width="13.8" height="13.8" fill="none" stroke="#666" stroke-width="1.2"/>
 <path d="M0.6 3.6H14.4M0.6 11.6H14.4M7.5 0.6V3.6M7.5 11.6V14.4" stroke="#666" stroke-width="1" fill="none"/>
 <path d="M2.6 7.6H12.4M4.4 5.9L2.6 7.6L4.4 9.3M10.6 5.9L12.4 7.6L10.6 9.3" stroke="#3f76b8" stroke-width="1" fill="none"/>
</svg>
<!-- Bold -->
<span class="t" style="left:451px;top:220.5px;font-size:13px;font-weight:700;line-height:16px;color:#555;z-index:30;transform:scaleX(0.9)">B</span>
<!-- Italic -->
<span class="t" style="left:474.3px;top:220.6px;font-family:'Liberation Serif',serif;font-style:italic;font-weight:700;font-size:14px;line-height:16px;color:#555;z-index:30">I</span>
<!-- center align -->
<svg style="left:492px;top:224px;z-index:30" width="16" height="10" viewBox="0 0 16 10"><path d="M1 0.6H15.2M3.2 3.5H12.8M1 6.4H15.2M3.2 9.3H12.8" stroke="#555" stroke-width="1" fill="none"/></svg>
<!-- fill color -->
<svg style="left:513px;top:220px;z-index:30" width="19" height="18" viewBox="513 220 19 18">
 <rect x="514.1" y="233" width="15.9" height="4" fill="#ffff00"/>
 <path d="M521 223.2L526.8 228.4L521.2 233.2L515.8 227.8Z" fill="#fff" stroke="#555" stroke-width="1"/>
 <path d="M520.2 226V222.2Q520.2 221.2 521.2 221.2Q522.2 221.2 522.2 222.2V224.4" fill="none" stroke="#555" stroke-width="0.9"/>
 <path d="M526.4 225.2Q530.6 227 529.4 231.4Q528 229.2 526.2 228.6L527.2 227.6Z" fill="#3f76b8"/>
</svg>
<svg style="left:536px;top:227px;z-index:30" width="6" height="4"><path d="M0 0H5.2L2.6 3Z" fill="#666"/></svg>
<!-- font color A -->
<span class="t" style="left:551.6px;top:219.8px;font-size:13.5px;line-height:16px;color:#555;z-index:30;-webkit-text-stroke:0.3px #555;transform:scaleX(1.04)">A</span>
<svg style="left:569.9px;top:227px;z-index:30" width="6" height="4"><path d="M0 0H5.2L2.6 3Z" fill="#666"/></svg>
<!-- borders -->
<svg style="left:582px;top:221px;z-index:30" width="16" height="15" viewBox="582 221 16 15" shape-rendering="crispEdges"><g fill="#777"><rect x="583" y="222" width="1" height="1"/><rect x="583" y="228" width="1" height="1"/><rect x="585" y="222" width="1" height="1"/><rect x="585" y="228" width="1" height="1"/><rect x="587" y="222" width="1" height="1"/><rect x="587" y="228" width="1" height="1"/><rect x="589" y="222" width="1" height="1"/><rect x="589" y="228" width="1" height="1"/><rect x="591" y="222" width="1" height="1"/><rect x="591" y="228" width="1" height="1"/><rect x="593" y="222" width="1" height="1"/><rect x="593" y="228" width="1" height="1"/><rect x="595" y="222" width="1" height="1"/><rect x="595" y="228" width="1" height="1"/><rect x="583" y="222" width="1" height="1"/><rect x="589" y="222" width="1" height="1"/><rect x="595" y="222" width="1" height="1"/><rect x="583" y="224" width="1" height="1"/><rect x="589" y="224" width="1" height="1"/><rect x="595" y="224" width="1" height="1"/><rect x="583" y="226" width="1" height="1"/><rect x="589" y="226" width="1" height="1"/><rect x="595" y="226" width="1" height="1"/><rect x="583" y="228" width="1" height="1"/><rect x="589" y="228" width="1" height="1"/><rect x="595" y="228" width="1" height="1"/><rect x="583" y="230" width="1" height="1"/><rect x="589" y="230" width="1" height="1"/><rect x="595" y="230" width="1" height="1"/><rect x="583" y="232" width="1" height="1"/><rect x="589" y="232" width="1" height="1"/><rect x="595" y="232" width="1" height="1"/></g><rect x="583" y="234" width="13" height="1" fill="#555"/></svg>
<svg style="left:603.9px;top:227px;z-index:30" width="6" height="4"><path d="M0 0H5.2L2.6 3Z" fill="#666"/></svg>
<!-- decrease decimal -->
<svg style="left:615px;top:221px;z-index:30" width="17" height="15" viewBox="615 221 17 15">
 <path d="M616.2 225.6H622.8M619 222.9L616.2 225.6L619 228.3" stroke="#3f76b8" stroke-width="1.2" fill="none"/>
 <text x="623.2" y="227.6" font-family="Liberation Sans, sans-serif" font-size="7.6" fill="#444">.0</text>
 <text x="618.4" y="235.2" font-family="Liberation Sans, sans-serif" font-size="7.6" fill="#444" textLength="12">.00</text>
</svg>
<!-- increase decimal -->
<svg style="left:637px;top:221px;z-index:30" width="17" height="15" viewBox="637 221 17 15">
 <text x="640.2" y="227.6" font-family="Liberation Sans, sans-serif" font-size="7.6" fill="#444" textLength="12">.00</text>
 <path d="M638 232.3H644.6M641.8 229.6L644.6 232.3L641.8 235" stroke="#3f76b8" stroke-width="1.2" fill="none"/>
 <text x="645.2" y="235.2" font-family="Liberation Sans, sans-serif" font-size="7.6" fill="#444">.0</text>
</svg>
<!-- format painter -->
<svg style="left:660px;top:221px;z-index:30" width="18" height="16" viewBox="660 221 18 16">
 <path d="M660.6 228L667 225L671 229.6L667 235.6Q664.5 231 660.6 228Z" fill="#eac282"/>
 <path d="M666.9 224.5L669.7 222.2L673.9 227L671.1 229.5Z" fill="#666"/>
 <path d="M672.2 224.8L675.5 222.3" stroke="#666" stroke-width="2.8"/>
</svg>
<!-- ===== context menu icons ===== -->
<!-- cut -->
<svg style="left:447px;top:265px;z-index:30" width="17" height="17" viewBox="447 265 17 17">
 <path d="M450.2 266.8L457.8 276.2M459.4 266.8L451.8 276.2" stroke="#4f4f4f" stroke-width="1.7" fill="none"/>
 <circle cx="450.7" cy="278.2" r="2.3" fill="none" stroke="#3f76b8" stroke-width="1.2"/>
 <circle cx="458.9" cy="278.2" r="2.3" fill="none" stroke="#3f76b8" stroke-width="1.2"/>
</svg>
<!-- copy -->
<svg style="left:446px;top:290px;z-index:30" width="18" height="16" viewBox="446 290 18 16">
 <path d="M447.5 291.6H452.6L454.8 293.8V301.4H447.5Z" fill="#fff" stroke="#666" stroke-width="1"/>
 <path d="M449 294.6H452M449 296.6H452M449 298.6H452" stroke="#3f76b8" stroke-width="0.9"/>
 <path d="M453.6 295.2H459.4L462 297.8V304.4H453.6Z" fill="#fff" stroke="#666" stroke-width="1"/>
 <path d="M455.4 298.8H460.2M455.4 300.6H460.2M455.4 302.4H460.2" stroke="#3f76b8" stroke-width="0.9"/>
</svg>
<!-- paste small -->
<svg style="left:447px;top:312px;z-index:30" width="17" height="18" viewBox="447 312 17 18">
 <rect x="448.1" y="315.2" width="12.6" height="12.4" rx="0.8" fill="#eac282"/>
 <path d="M451.4 316.4H457.6V315.2H455.6V314Q455.6 313.2 454.5 313.2Q453.4 313.2 453.4 314V315.2H451.4Z" fill="#666"/>
 <path d="M455.2 320.6H460.2L462.6 323V328.4H455.2Z" fill="#fff" stroke="#666" stroke-width="1"/>
</svg>
<!-- paste large -->
<svg style="left:472px;top:335px;z-index:30" width="24" height="26" viewBox="472 335 24 26">
 <rect x="473.3" y="340.1" width="17.6" height="17.4" rx="1" fill="#eac282"/>
 <path d="M477.4 341.8H486.8V340.1H484V338.6Q484 337.2 482.1 337.2Q480.2 337.2 480.2 338.6V340.1H477.4Z" fill="#666"/>
 <path d="M483.4 346.6H490.4L493.6 349.8V359.4H483.4Z" fill="#fff" stroke="#666" stroke-width="1"/>
</svg>
<!-- quick analysis (disabled) -->
<svg style="left:447px;top:467px;z-index:30" width="16" height="16" viewBox="447 467 16 16">
 <path d="M454.4 468.2H461.9V481.8H448.1V479H449.1V480.8H460.9V470.4H453.4Z" fill="#ababab"/>
 <path d="M453.4 470.4H460.9V480.8H449.1V477.5Z" fill="#f6f1f6"/>
 <rect x="453.4" y="472.3" width="3.5" height="1.3" fill="#9a9a9a"/>
 <rect x="452.1" y="475.2" width="7.7" height="1.5" fill="#ababab"/>
 <rect x="452.1" y="478.3" width="5.7" height="1.3" fill="#ababab"/>
 <path d="M450.2 467.2H453.8L451.9 471.6H454.3L447.4 477.9L449.5 472.8H447.5Z" fill="#d6d6d6" stroke="#fff" stroke-width="0.6"/>
</svg>
<!-- submenu arrows -->
<svg style="left:631px;top:495.2px;z-index:30" width="5" height="8"><path d="M0 0V7.2L4 3.6Z" fill="#777"/></svg>
<svg style="left:631px;top:519.2px;z-index:30" width="5" height="8"><path d="M0 0V7.2L4 3.6Z" fill="#777"/></svg>
<!-- edit comment -->
<svg style="left:447px;top:540px;z-index:30" width="16" height="16" viewBox="447 540 16 16">
 <path d="M455.6 543.9H447.7V554H457.7L461.3 550.4V547.6" fill="#fff" stroke="#666" stroke-width="1"/>
 <path d="M457.7 554V550.4H461.3" fill="none" stroke="#666" stroke-width="0.9"/>
 <path d="M453.9 548.9L460.9 542" stroke="#3f76b8" stroke-width="3"/>
 <path d="M451.8 551.2L452.5 548.6L454.4 550.5Z" fill="#3f76b8"/>
</svg>
<!-- delete comment -->
<svg style="left:446px;top:565px;z-index:30" width="18" height="17" viewBox="446 565 18 17">
 <path d="M455.4 569.4H462.4V576.8L458.9 580.2H448.5V575.8" fill="none" stroke="#666" stroke-width="1"/>
 <path d="M458.9 580.2V576.8H462.4" fill="none" stroke="#666" stroke-width="0.9"/>
 <path d="M447.8 566.2L457 575M456.6 566.6L447.6 575" stroke="#d9593a" stroke-width="2.1" fill="none"/>
</svg>
<!-- format cells -->
<svg style="left:447px;top:614px;z-index:30" width="16" height="18" viewBox="447 614 16 18">
 <rect x="448.8" y="615.5" width="12.6" height="14.6" fill="#fff" stroke="#666" stroke-width="1"/>
 <rect x="448.3" y="615" width="13.6" height="2.4" fill="#3f76b8"/>
 <circle cx="452.4" cy="621.6" r="1.3" fill="#555"/>
 <circle cx="452.4" cy="626" r="1.1" fill="none" stroke="#555" stroke-width="0.8"/>
 <path d="M455 621.6H459.2M455 626H459.2" stroke="#555" stroke-width="1"/>
</svg>
<!-- hyperlink -->
<svg style="left:447px;top:686px;z-index:30" width="17" height="18" viewBox="447 686 17 18">
 <path d="M447.5 695.5A6 6 0 1 1 458.5 695.5" fill="none" stroke="#6a6a6a" stroke-width="1"/>
 <path d="M453 687.3Q448.8 691 450.4 695.5M453 687.3Q457.2 691 455.6 695.5M447.8 690.5H458.2M447.1 694.3H458.9" fill="none" stroke="#6a6a6a" stroke-width="0.9"/>
 <rect x="449.2" y="697.1" width="7.4" height="4.8" rx="2.4" fill="none" stroke="#3a72b5" stroke-width="1.9"/>
 <rect x="454.8" y="697.1" width="7.4" height="4.8" rx="2.4" fill="none" stroke="#3a72b5" stroke-width="1.9"/>
</svg>

<!-- black ellipse annotation -->
<svg style="left:0;top:0;z-index:40" width="1365" height="723"><ellipse cx="543.7" cy="548.3" rx="104.8" ry="21.4" fill="none" stroke="#000" stroke-width="5.2"/></svg>
</div></body></html>
